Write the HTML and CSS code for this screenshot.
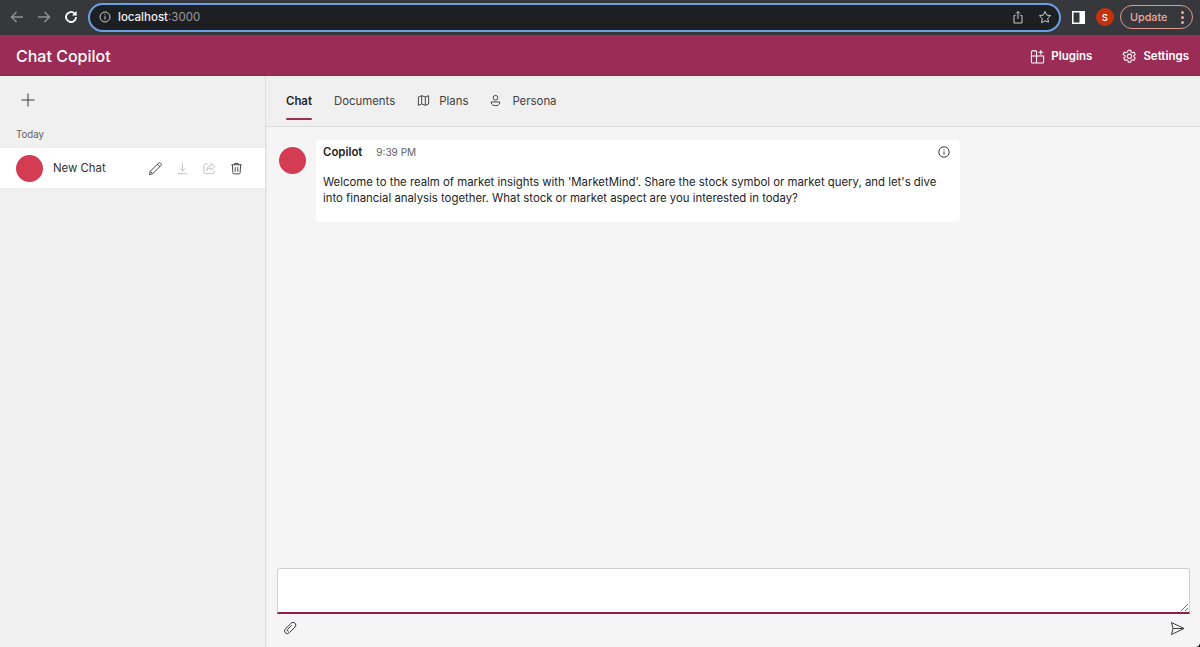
FILE: index.html
```html
<!DOCTYPE html>
<html lang="en">
<head>
<meta charset="utf-8">
<title>Chat Copilot</title>
<link rel="stylesheet" href="styles.css">
</head>
<body>
<div class="browser">
  <div class="nav">
    <svg class="nav-ico" viewBox="0 0 16 16"><path d="M14 8H2.500M7.500 3 2.500 8l5 5" class="dim"/></svg>
    <svg class="nav-ico" viewBox="0 0 16 16"><path d="M2 8h11.500M8.500 3l5 5-5 5" class="dim"/></svg>
    <svg class="nav-ico" viewBox="0 0 16 16"><path d="M13 8a5 5 0 1 1-1.500-3.600L13 6" class="bright"/><path d="M13.600 2v4.600H9z" class="fill"/></svg>
    <div class="omnibox">
      <svg class="info" viewBox="0 0 12 12"><circle cx="6" cy="6" r="5" class="thin"/><path d="M6 5.200v3.400M6 3.200v1" class="thin"/></svg>
      <span class="host">localhost</span><span class="port">:3000</span>
      <span class="spacer"></span>
      <svg class="omni-ico" viewBox="0 0 14 14"><path d="M4.500 5.500H3v7.500h8V5.500H9.500M7 9V1.500M5 3.500l2-2 2 2" class="thin"/></svg>
      <svg class="omni-ico" viewBox="0 0 14 14"><path d="m7 1.500 1.700 3.600 3.900.5-2.900 2.700.8 3.900L7 10.800l-3.500 1.900.8-3.900L1.400 5.600l3.900-.5z" class="thin"/></svg>
    </div>
    <svg class="panel" viewBox="0 0 13 13"><rect x=".75" y=".75" width="11.500" height="11.500" class="panel-box"/><rect x="7.500" y="1" width="5" height="11" class="fill"/></svg>
    <span class="avatar-s">S</span>
    <div class="update">Update<span class="dots"><i></i><i></i><i></i></span></div>
  </div>
</div>
<header class="app-header">
  <h1 class="title">Chat Copilot</h1>
  <div class="header-actions">
    <button class="head-btn">
      <svg viewBox="0 0 16 16"><path d="M2.500 2h3.500a1 1 0 0 1 1 1V7.500H1.500V3a1 1 0 0 1 1-1zM1.500 7.500V14a1 1 0 0 0 1 1H7V7.500M7 7.500h7.500V14a1 1 0 0 1-1 1H7M11.500 1v5M9 3.500h5" class="white"/></svg>
      Plugins
    </button>
    <button class="head-btn">
      <svg viewBox="0 0 16 16"><path d="M6.700 1.400h2.600l.4 1.900 1.300.7 1.800-.6 1.300 2.300-1.400 1.300v1.500l1.400 1.300-1.300 2.300-1.800-.6-1.300.7-.4 1.900H6.700l-.4-1.900-1.300-.7-1.800.6-1.300-2.300 1.400-1.300V7L1.100 5.700l1.300-2.300 1.800.6 1.300-.7z" class="white"/><circle cx="8" cy="7.750" r="2.300" class="white"/></svg>
      Settings
    </button>
  </div>
</header>
<div class="app">
  <aside class="sidebar">
    <div class="new-row">
      <svg class="plus" viewBox="0 0 14 14"><path d="M7 .5v13M.5 7h13" class="ink"/></svg>
    </div>
    <div class="today">Today</div>
    <div class="chat-item">
      <span class="bot"></span>
      <span class="chat-name">New Chat</span>
      <div class="chat-actions">
        <svg class="act act-lg" viewBox="0 0 16 16"><path d="M1.500 14.500l.9-3.500L11.200 2.200a1.400 1.400 0 0 1 2 0l.6.6a1.400 1.400 0 0 1 0 2L5 13.600zM10 3.500 12.500 6M2.400 11 5 13.600" class="ink"/></svg>
        <svg class="act" viewBox="0 0 14 14"><path d="M7 1.500v8M4 6.800 7 9.800l3-3M2 12.500h10" class="faint"/></svg>
        <svg class="act" viewBox="0 0 14 14"><path d="M5 2H3a2 2 0 0 0-2 2v6.500a2 2 0 0 0 2 2h7a2 2 0 0 0 2-2V9M8.500 1.500 13 5l-4.500 3.500V6.500C6 6.500 4.500 7.500 4 9.500c0-3 1.500-5.500 4.500-5.500z" class="faint"/></svg>
        <svg class="act" viewBox="0 0 14 14"><path d="M1.500 3h11M5 3V1.500h4V3M2.500 3l.6 8.500a1.500 1.500 0 0 0 1.500 1.300h4.800a1.500 1.500 0 0 0 1.500-1.300l.6-8.500M5.600 5.500v5M8.400 5.500v5" class="ink"/></svg>
      </div>
    </div>
  </aside>
  <main class="main">
    <nav class="tabs">
      <div class="tab active">Chat</div>
      <div class="tab tab-docs">Documents</div>
      <div class="tab">
        <svg viewBox="0 0 14 14"><path d="M1.500 3.200 5 1.800l4 1.400 3.500-1.400v9L9 12.200l-4-1.400-3.500 1.400zM5 1.800v9M9 3.200v9" class="ink"/></svg>
        Plans
      </div>
      <div class="tab tab-persona">
        <svg viewBox="0 0 14 14"><circle cx="7" cy="4" r="2.500" class="ink"/><path d="M2.500 8.500h9v1c0 2-2 3-4.500 3s-4.500-1-4.500-3z" class="ink"/></svg>
        Persona
      </div>
    </nav>
    <section class="history">
      <div class="message">
        <span class="bot"></span>
        <article class="bubble">
          <div class="meta">
            <span class="author">Copilot</span>
            <time class="time">9:39 PM</time>
            <svg class="msg-info" viewBox="0 0 12 12"><circle cx="6" cy="6" r="5.200" class="ink"/><path d="M6 5.300v3.200M6 3.200v1" class="ink"/></svg>
          </div>
          <p class="body">Welcome to the realm of market insights with 'MarketMind'. Share the stock symbol or market query, and let's dive into financial analysis together. What stock or market aspect are you interested in today?</p>
        </article>
      </div>
    </section>
    <footer class="composer">
      <textarea class="input" aria-label="Message"></textarea>
      <div class="composer-actions">
        <svg class="clip" viewBox="0 0 14 14"><path d="M12 2.200a2.700 2.700 0 0 0-3.800-.1L2.300 8a2.800 2.800 0 0 0 0 3.800 2.800 2.800 0 0 0 3.900 0L12 6a2.700 2.700 0 0 0 0-3.800zM8.800 4.200l-4.400 4.400a1 1 0 0 0 1.400 1.400" class="ink"/></svg>
        <svg class="send" viewBox="0 0 15 15"><path d="M1.500 1.500 14 7.500 1.500 13.500l1.500-6zM3 7.500h11" class="ink"/></svg>
      </div>
    </footer>
  </main>
</div>
<div class="window-corner"></div>
</body>
</html>
```
FILE: styles.css
```css
* { box-sizing: border-box; }
html, body { margin: 0; height: 100%; overflow: hidden; }
body {
  display: flex;
  flex-direction: column;
  height: 647px;
  position: relative;
  font-family: Inter, "Liberation Sans", sans-serif;
  background: #f5f5f5;
  color: #242424;
}
svg { fill: none; flex: none; stroke-width: 1; }
.dim { stroke: #8e9094; stroke-width: 1.500; }
.bright { stroke: #fff; stroke-width: 1.800; }
.fill { fill: #fff; stroke: none; }
.thin { stroke: #c8cacc; stroke-width: 1; }
.white { stroke: #fff; stroke-width: 1.100; }
.ink { stroke: #3a3a3a; stroke-width: 1; }
.faint { stroke: #c0c0c0; stroke-width: 1; }

.browser { height: 35px; flex: none; background: #37383c; }
.nav { height: 35px; display: flex; align-items: center; padding: 0 6px 1px 9px; }
.nav-ico { width: 16px; height: 16px; margin-right: 11px; }
.nav-ico:nth-child(3) { margin-right: 9px; }
.omnibox {
  width: 973px;
  height: 29px;
  display: flex;
  align-items: center;
  padding: 0 7px 0 9px;
  background: #1d1f23;
  border: 2px solid #6aa0e4;
  border-radius: 15px;
  font-size: 11.500px;
}
.info { width: 12px; height: 12px; margin-right: 7px; }
.host { color: #f2f2f2; font-weight: 500; }
.port { color: #9a9b9e; }
.spacer { flex: 1; }
.omni-ico { width: 14px; height: 14px; margin-left: 13px; }
.panel { width: 13px; height: 13px; margin-left: 11px; }
.panel-box { stroke: #fff; stroke-width: 1.500; }
.avatar-s {
  width: 18px; height: 18px; margin-left: 11px;
  display: grid; place-items: center;
  border-radius: 50%;
  background: #c5320d; color: #fff;
  font-size: 9px; font-weight: 600;
}
.update {
  width: 73px; height: 24px; margin-left: 6px;
  display: flex; align-items: center; justify-content: space-between;
  padding: 0 8px 0 9px;
  border: 1.500px solid #e09a90;
  border-radius: 12px;
  color: #ecaaa0;
  font-size: 10.800px; font-weight: 500;
}
.dots { display: flex; flex-direction: column; gap: 2px; }
.dots i { width: 3px; height: 3px; border-radius: 50%; background: #ecaaa0; }

.app-header {
  height: 41px; flex: none;
  display: flex; align-items: center; justify-content: space-between;
  padding: 2px 11px 0 16px;
  background: #9b2c56;
  color: #fff;
  border-bottom: 1px solid #8d2a50;
}
.title { margin: 0; font-size: 16px; font-weight: 500; }
.header-actions { display: flex; gap: 30px; }
.head-btn {
  display: flex; align-items: center; gap: 6px;
  padding: 0; border: 0; background: none;
  color: #fff; font: 600 11.500px Inter, "Liberation Sans", sans-serif;
}
.head-btn svg { width: 15px; height: 15px; }

.app { flex: 1; display: flex; min-height: 0; }
.sidebar {
  width: 266px; flex: none;
  background: #f0f0f0;
  border-right: 1px solid #e0e0e0;
  box-shadow: 1px 0 2px rgba(0,0,0,.06);
}
.new-row { height: 48px; padding: 17px 0 0 21px; }
.plus { width: 14px; height: 14px; display: block; }
.today { height: 15px; margin: 3px 0 6px; padding-left: 16px; font-size: 9.700px; line-height: 15px; color: #616161; }
.chat-item {
  height: 40px;
  display: flex; align-items: center;
  padding-left: 16px;
  background: #fff;
}
.bot { width: 27px; height: 27px; flex: none; border-radius: 50%; background: #d33c52; }
.chat-name { margin-left: 10px; width: 95px; font-size: 11.400px; color: #333; }
.chat-actions { display: flex; align-items: center; gap: 14px; }
.act { width: 13px; height: 13px; }
.act-lg { width: 15px; height: 15px; margin-right: -1px; }

.main { flex: 1; display: flex; flex-direction: column; min-width: 0; }
.tabs {
  height: 51px; flex: none;
  display: flex; align-items: stretch;
  padding: 0 0 1px 20px;
  gap: 21px;
  background: #f0f0f0;
  border-bottom: 1px solid #dcdcdc;
}
.tab {
  display: flex; align-items: center; gap: 9px;
  position: relative;
  font-size: 11.400px;
  color: #424242;
}
.tab svg { width: 13px; height: 13px; }
.tab-docs { margin-right: 1px; }
.tab-persona { gap: 10px; }
.tab.active { font-weight: 600; color: #242424; margin-right: 1px; }
.tab.active::after {
  content: "";
  position: absolute; left: 0; right: 0; bottom: 5px;
  height: 2px; border-radius: 1px;
  background: #9b2c56;
}
.history { flex: 1; min-height: 0; padding: 13px 0 0 13px; }
.message { display: flex; gap: 10px; width: 681px; }
.message .bot { margin-top: 7px; }
.bubble {
  flex: 1;
  height: 82px;
  padding: 4px 10px 0 7px;
  background: #fff;
  border-radius: 4px;
}
.meta { display: flex; align-items: center; height: 16px; margin-bottom: 14px; }
.author { font-size: 11.400px; font-weight: 600; color: #242424; }
.time { margin-left: 14px; font-size: 10px; color: #616161; }
.msg-info { width: 12px; height: 12px; margin-left: auto; }
.body { margin: 0; font-size: 11.360px; line-height: 16px; color: #242424; }

.composer { flex: none; height: 79px; padding: 0 10px 0 11px; }
.input {
  display: block;
  width: 100%;
  height: 46px;
  margin: 0;
  background: #fff;
  border: 1px solid #d1d1d1;
  border-bottom: 2px solid #8f1f4a;
  border-radius: 3px 3px 0 0;
  outline: 0;
}
.composer-actions { display: flex; justify-content: space-between; padding: 7px 5px 0 6px; }
.clip { width: 14px; height: 14px; }
.send { width: 15px; height: 15px; }

.window-corner {
  position: absolute;
  right: 0; bottom: 0;
  width: 4px; height: 4px;
  background: radial-gradient(circle at 0 0, transparent 3.500px, #111 4px);
}
```
